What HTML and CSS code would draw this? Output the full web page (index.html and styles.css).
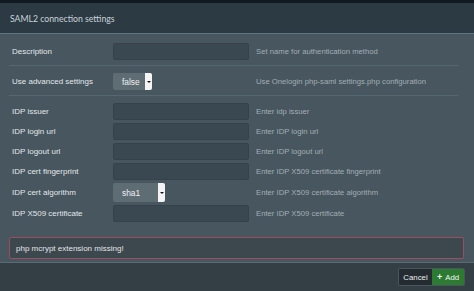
FILE: index.html
```html
<!DOCTYPE html>
<html>
<head>
<meta charset="utf-8">
<link rel="stylesheet" href="styles.css">
</head>
<body>
<div class="topstrip"></div>
<div class="modal">
  <div class="modal-header">SAML2 connection settings</div>
  <div class="modal-body">
    <div class="group">
      <div class="row">
        <div class="label">Description</div>
        <div class="field"><div class="input"></div></div>
        <div class="help">Set name for authentication method</div>
      </div>
    </div>
    <div class="group">
      <div class="row">
        <div class="label">Use advanced settings</div>
        <div class="field"><div class="select sel-false"><span class="sel-text">false</span><span class="caret-box"><span class="caret"></span></span></div></div>
        <div class="help">Use Onelogin php-saml settings.php configuration</div>
      </div>
    </div>
    <div class="group group-last">
      <div class="row">
        <div class="label">IDP issuer</div>
        <div class="field"><div class="input"></div></div>
        <div class="help">Enter idp issuer</div>
      </div>
      <div class="row">
        <div class="label">IDP login url</div>
        <div class="field"><div class="input"></div></div>
        <div class="help">Enter IDP login url</div>
      </div>
      <div class="row">
        <div class="label">IDP logout url</div>
        <div class="field"><div class="input"></div></div>
        <div class="help">Enter IDP logout url</div>
      </div>
      <div class="row">
        <div class="label">IDP cert fingerprint</div>
        <div class="field"><div class="input"></div></div>
        <div class="help">Enter IDP X509 certificate fingerprint</div>
      </div>
      <div class="row">
        <div class="label">IDP cert algorithm</div>
        <div class="field"><div class="select sel-sha"><span class="sel-text">sha1</span><span class="caret-box"><span class="caret"></span></span></div></div>
        <div class="help">Enter IDP X509 certificate algorithm</div>
      </div>
      <div class="row">
        <div class="label">IDP X509 certificate</div>
        <div class="field"><div class="input"></div></div>
        <div class="help">Enter IDP X509 certificate</div>
      </div>
    </div>
    <div class="alert">php mcrypt extension missing!</div>
  </div>
  <div class="modal-footer">
    <div class="btn-group">
      <span class="btn btn-cancel">Cancel</span>
      <span class="btn btn-add"><span class="plus">+</span>Add</span>
    </div>
  </div>
</div>
</body>
</html>
```

FILE: styles.css
```css
* { box-sizing: border-box; }
html, body {
  margin: 0;
  padding: 0;
  width: 474px;
  height: 291px;
  overflow: hidden;
  background: #111a20;
  font-family: "Liberation Sans", Arial, sans-serif;
}
.topstrip {
  height: 3px;
  background: #111a20;
}
.modal {
  display: flex;
  flex-direction: column;
  height: 288px;
}
.modal-header {
  height: 31px;
  background: #2c3a44;
  border-bottom: 1px solid #5f7581;
  color: #c9d2d8;
  font-family: "Lato", "Open Sans", sans-serif;
  font-size: 8.7px;
  padding: 0 10px;
  display: flex;
  align-items: center;
}
.modal-body {
  background: #47565f;
  padding: 2px 10px 3px 9px;
}
.group {
  padding: 7px 0 5px;
  border-bottom: 1px solid #566770;
  display: flex;
  flex-direction: column;
  gap: 3px;
  margin-right: 6px;
}
.group-last {
  border-bottom: none;
  padding-bottom: 0;
}
.row {
  display: flex;
  align-items: center;
  font-size: 8px;
}
.label {
  width: 104px;
  padding-left: 3px;
  color: #e2e7ea;
}
.field {
  width: 136px;
}
.help {
  margin-left: 7px;
  color: #a2aeb4;
  font-size: 7.7px;
}
.input {
  width: 136px;
  height: 17px;
  background: #3a4851;
  border: 1px solid #35424a;
  border-radius: 2px;
}
.select {
  display: flex;
  align-items: stretch;
  height: 17px;
  background: #5e6c74;
  border-radius: 2px;
  color: #eef1f2;
  font-size: 8.4px;
}
.sel-false { width: 39px; }
.sel-sha { width: 52px; height: 19px; }
.sel-text {
  flex: 1;
  display: flex;
  align-items: center;
  padding-left: 9px;
}
.caret-box {
  width: 7px;
  background: #f4f4f4;
  display: flex;
  align-items: center;
  justify-content: center;
  border-radius: 0 2px 2px 0;
}
.caret {
  width: 0;
  height: 0;
  border-left: 2px solid transparent;
  border-right: 2px solid transparent;
  border-top: 2px solid #111;
}
.alert {
  margin-top: 15px;
  height: 22px;
  border: 1px solid #9a4f60;
  background: #3d474e;
  color: #e2e6e8;
  font-size: 8px;
  display: flex;
  align-items: center;
  padding-left: 6px;
  border-radius: 2px;
}
.modal-footer {
  flex: 1;
  background: #333e45;
  border-top: 1px solid #5a6b74;
  display: flex;
  align-items: center;
  justify-content: flex-end;
  padding-right: 9px;
}
.btn-group {
  display: flex;
  height: 18px;
  border: 1px solid #4a565d;
  border-radius: 2px;
  overflow: hidden;
}
.btn {
  display: flex;
  align-items: center;
  justify-content: center;
  font-size: 7.8px;
  color: #e8ecee;
}
.btn-cancel {
  width: 33px;
  background: #242c31;
}
.btn-add {
  width: 32px;
  background: #2d7a33;
  color: #f2f6f2;
}
.plus {
  font-weight: bold;
  font-size: 9px;
  margin-right: 3px;
}
```
